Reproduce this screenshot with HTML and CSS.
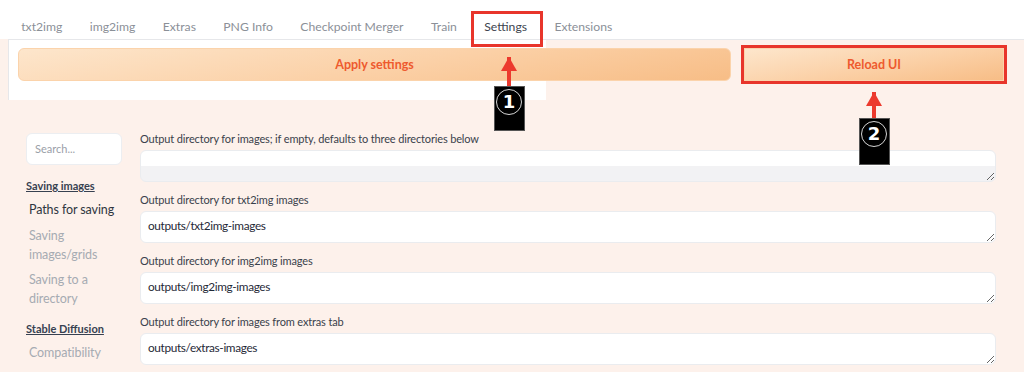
FILE: index.html
```html
<!DOCTYPE html>
<html lang="en">
<head>
<meta charset="utf-8">
<title>Settings</title>
<link rel="stylesheet" href="styles.css">
</head>
<body>
<div class="page">
  <nav class="tabs">
    <span class="tab">txt2img</span>
    <span class="tab">img2img</span>
    <span class="tab">Extras</span>
    <span class="tab">PNG Info</span>
    <span class="tab">Checkpoint Merger</span>
    <span class="tab">Train</span>
    <span class="tab tab-active">Settings</span>
    <span class="tab">Extensions</span>
  </nav>
  <div class="panel">
    <div class="actions">
      <button class="btn btn-apply">Apply settings</button>
      <button class="btn btn-reload">Reload UI</button>
    </div>
  </div>
  <div class="settings">
    <aside class="sidebar">
      <div class="search">Search...</div>
      <div class="sec">Saving images</div>
      <div class="item item-on">Paths for saving</div>
      <div class="item">Saving images/grids</div>
      <div class="item">Saving to a directory</div>
      <div class="sec">Stable Diffusion</div>
      <div class="item">Compatibility</div>
    </aside>
    <main class="fields">
      <div class="field">
        <label class="lbl">Output directory for images; if empty, defaults to three directories below</label>
        <textarea class="box box-empty" rows="1"></textarea>
      </div>
      <div class="field">
        <label class="lbl">Output directory for txt2img images</label>
        <textarea class="box" rows="1">outputs/txt2img-images</textarea>
      </div>
      <div class="field">
        <label class="lbl">Output directory for img2img images</label>
        <textarea class="box" rows="1">outputs/img2img-images</textarea>
      </div>
      <div class="field">
        <label class="lbl">Output directory for images from extras tab</label>
        <textarea class="box" rows="1">outputs/extras-images</textarea>
      </div>
    </main>
  </div>

  <div class="note note-1">
    <div class="arrow"></div>
    <div class="badge"><span class="num">1</span></div>
  </div>
  <div class="note note-2">
    <div class="arrow"></div>
    <div class="badge"><span class="num">2</span></div>
  </div>
</div>
</body>
</html>
```

FILE: styles.css
```css
* { box-sizing: border-box; }
html, body { margin: 0; padding: 0; }
body {
  width: 1024px;
  height: 372px;
  overflow: hidden;
  background: #fdf1eb;
  font-family: Lato, "Open Sans", sans-serif;
  color: #374151;
}
.page { position: relative; height: 372px; }

.tabs {
  display: flex;
  align-items: flex-end;
  height: 39px;
  padding-left: 7.5px;
  background: #fff;
}
.tab {
  padding: 0 13.7px 4px;
  font-size: 12.2px;
  line-height: 16px;
  color: #8b9098;
  white-space: nowrap;
}
.tab-active {
  position: relative;
  color: #3d444e;
}
.tab-active::after {
  content: "";
  position: absolute;
  top: -8px;
  bottom: -8px;
  left: 0;
  right: -2px;
  border: 3px solid #e8352b;
}

.panel {
  height: 61px;
  margin-left: 8px;
  border-left: 1px solid #e6e7ea;
  border-top: 1px solid #e6e7ea;
  background: linear-gradient(to right, #fff 537px, #fdf1eb 537px);
  padding: 8px 20px 0 9px;
}
.actions {
  display: flex;
  gap: 13px;
}
.btn {
  height: 33px;
  border: 1px solid #fbd3ab;
  border-radius: 6px;
  background: linear-gradient(170deg, #fde6cc 0%, #fbd0a6 55%, #f7bd86 100%);
  color: #ee5a2e;
  font-family: Lato, "Open Sans", sans-serif;
  font-weight: 700;
  font-size: 12.5px;
  padding: 0;
}
.btn-apply { flex: 714 1 0; }
.btn-reload {
  flex: 259 1 0;
  border-radius: 0;
  outline: 3px solid #e8352b;
  outline-offset: 0;
}

.settings {
  display: flex;
  gap: 18px;
  padding: 31px 28px 0 26px;
}
.sidebar {
  width: 96px;
  flex: none;
  padding-top: 2px;
}
.search {
  height: 32px;
  background: #fff;
  border: 1px solid #eceef1;
  border-radius: 6px;
  padding-left: 8px;
  font-size: 11px;
  line-height: 30px;
  color: #9aa0a8;
}
.sec {
  margin-top: 13px;
  font-size: 11px;
  line-height: 16px;
  font-weight: 700;
  text-decoration: underline;
  color: #374151;
}
.item {
  margin-top: 6.5px;
  padding-left: 3px;
  font-size: 12.5px;
  letter-spacing: -0.1px;
  line-height: 19px;
  color: #a6abb2;
}
.item-on { color: #2f3640; }
.sec + .item { margin-top: 6px; }

.fields { flex: 1; min-width: 0; }
.field { margin-bottom: 10px; }
.lbl {
  display: block;
  font-size: 11px;
  letter-spacing: -0.15px;
  line-height: 16px;
  margin-bottom: 3px;
  color: #3a414c;
}
.box {
  display: block;
  width: 100%;
  height: 32px;
  resize: vertical;
  border: 1px solid #eaecef;
  border-radius: 6px;
  background: #fff;
  padding: 6px 7px 7px;
  font-family: Lato, "Open Sans", sans-serif;
  font-size: 11.8px;
  letter-spacing: -0.35px;
  line-height: 16px;
  color: #1f2937;
  overflow: hidden;
}
.box-empty {
  background: linear-gradient(to bottom, #fff 50%, #f2f2f4 50%);
}

.note {
  position: absolute;
  display: flex;
  flex-direction: column;
  align-items: center;
  width: 32px;
}
.note-1 { left: 493px; top: 57px; }
.note-2 { left: 858px; top: 92px; }
.arrow {
  position: relative;
  width: 4px;
  height: 29px;
  background: #ec3a2e;
}
.note-2 .arrow { height: 26px; }
.arrow::before {
  content: "";
  position: absolute;
  left: -6px;
  top: 0;
  border-left: 8px solid transparent;
  border-right: 8px solid transparent;
  border-bottom: 14px solid #ec3a2e;
}
.badge {
  width: 31px;
  height: 45px;
  background: #000;
  border: 1px solid #555;
  display: flex;
  justify-content: center;
  padding-top: 2px;
}
.note-2 .badge { height: 47px; }
.num {
  width: 26px;
  height: 26px;
  border-radius: 50%;
  border: 1.5px solid #d6d6d6;
  color: #fff;
  font-family: "DejaVu Sans", sans-serif;
  font-weight: 700;
  font-size: 18px;
  line-height: 23px;
  text-align: center;
}
```
